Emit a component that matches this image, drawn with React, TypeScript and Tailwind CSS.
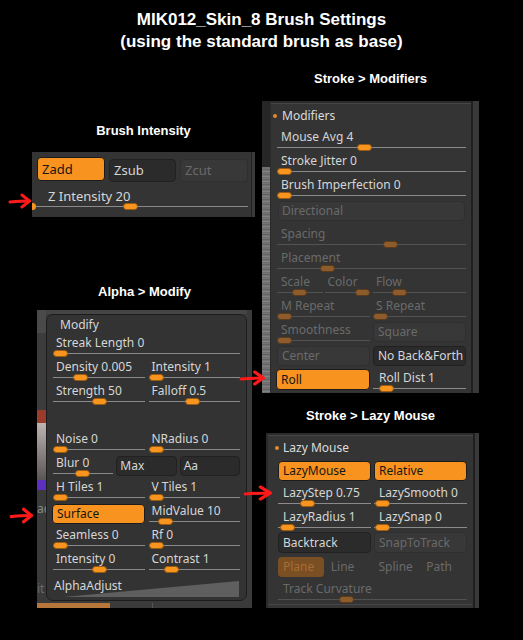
import React from 'react';

type Kind = 'on' | 'off' | 'dis' | 'plane';

const boxKind: Record<Kind, string> = {
  on: 'bg-[#f7931e] border border-[#1b1b1b] text-[#161616]',
  off: 'bg-[#2b2b2b] border border-[#212121] text-[#d6d6d6]',
  dis: 'bg-[#383838] border border-[#2f2f2f] text-[#6a6a6a]',
  plane: 'bg-[#7a4f24] text-[#a86c33]',
};

function Box({
  label,
  kind,
  cls = 'mt-[1px] h-[20px]',
  pl = 'pl-[4px]',
}: {
  label: string;
  kind: Kind;
  cls?: string;
  pl?: string;
}) {
  return (
    <div className={`flex items-center rounded-[4px] whitespace-nowrap leading-none ${boxKind[kind]} ${cls} ${pl}`}>
      {label}
    </div>
  );
}

function Slider({
  label,
  x,
  dim = false,
  pl = 'pl-[4px]',
}: {
  label: string;
  x: number;
  dim?: boolean;
  pl?: string;
}) {
  return (
    <div className="relative h-[24px]">
      <div className={`leading-[18px] whitespace-nowrap ${pl} ${dim ? 'text-[#6a6a6a]' : 'text-[#d6d6d6]'}`}>{label}</div>
      <div className={`absolute left-0 right-0 top-[19px] h-px ${dim ? 'bg-[#525252]' : 'bg-[#8a8a8a]'}`} />
      <div
        className={`absolute top-[16px] h-[7px] w-[15px] rounded-full border ${
          dim ? 'bg-[#8d5c2c] border-[#5e3b18]' : 'bg-[#f8951f] border-[#9c5a12]'
        }`}
        style={{ left: x }}
      />
    </div>
  );
}

function Label({ children, className = '' }: { children: React.ReactNode; className?: string }) {
  return (
    <div
      className={`text-center font-['Liberation_Sans',Arial,sans-serif] font-bold text-[13px] leading-[16px] text-white ${className}`}
    >
      {children}
    </div>
  );
}

function Arrow({ className }: { className: string }) {
  return (
    <svg
      className={`absolute ${className}`}
      viewBox="0 0 24 16"
      preserveAspectRatio="none"
      fill="none"
      stroke="#ff1a1a"
      strokeWidth="3"
      strokeLinecap="round"
      strokeLinejoin="round"
    >
      <path d="M2 9 C8 8.5 15 8 22 8" />
      <path d="M14.5 2 L22.5 8 L14.5 14" />
    </svg>
  );
}

function BrushPanel() {
  return (
    <div className="mt-[13px] ml-[32px] flex h-[65px] w-[223px] bg-[#343434] text-[13px]">
      <div className="flex-1">
        <div className="flex gap-[4px] pl-[5px] pt-[5px]">
          <Box label="Zadd" kind="on" cls="h-[24px] w-[68px]" />
          <Box label="Zsub" kind="off" cls="mt-[2px] h-[23px] w-[67px]" />
          <Box label="Zcut" kind="dis" cls="mt-[2px] h-[23px] w-[68px]" />
        </div>
        <div className="relative ml-[4px] mr-[3px] mt-[5px]">
          <div className="absolute -left-[4px] top-[16px] h-[7px] w-[4px] rounded-r-full bg-[#f8951f]" />
          <Slider label="Z Intensity 20" x={87} pl="pl-[12px]" />
        </div>
      </div>
      <div className="w-px bg-[#222222]" />
      <div className="w-[3px] bg-[#3a3a3a]" />
    </div>
  );
}

function ModifiersPanel() {
  return (
    <div className="mt-[14px] flex h-[292px] bg-[#343434]">
      <div className="flex w-[8px] flex-col">
        <div className="h-[66px] bg-[#262626]" />
        <div className="flex-1 bg-[repeating-linear-gradient(0deg,#666666_0px,#8a8a8a_2px,#5c5c5c_3px,#7a7a7a_5px)]" />
      </div>
      <div className="flex flex-1 flex-col border-l border-[#2a2a2a]">
        <div className="h-[2px] bg-[#2a2a2a]" />
        <div className="h-px bg-[#474747]" />
        <div className="mb-[2px] mt-[2px] flex h-[20px] items-center pl-[2px] text-[#dcdcdc]">
          <span className="h-[4px] w-[4px] rounded-full bg-[#e8872a]" />
          <span className="ml-[5px]">Modifiers</span>
        </div>
        <div className="pl-[6px] pr-[5px]">
          <Slider label="Mouse Avg 4" x={80} />
          <Slider label="Stroke Jitter 0" x={0} />
          <Slider label="Brush Imperfection 0" x={0} />
          <div className="h-[24px] px-[1px]">
            <Box label="Directional" kind="dis" pl="pl-[3px]" />
          </div>
          <Slider label="Spacing" x={106} dim />
          <Slider label="Placement" x={43} dim />
          <div className="grid grid-cols-2 gap-[3px]">
            <div className="flex gap-[2px]">
              <div className="flex-1">
                <Slider label="Scale" x={15} dim />
              </div>
              <div className="flex-1">
                <Slider label="Color" x={30} dim pl="pl-[3px]" />
              </div>
            </div>
            <Slider label="Flow" x={19} dim pl="pl-[3px]" />
          </div>
          <div className="grid grid-cols-2 gap-[3px]">
            <Slider label="M Repeat" x={0} dim />
            <Slider label="S Repeat" x={0} dim pl="pl-[3px]" />
          </div>
          <div className="grid grid-cols-2 gap-[3px]">
            <Slider label="Smoothness" x={0} dim />
            <div className="h-[24px]">
              <Box label="Square" kind="dis" />
            </div>
          </div>
          <div className="grid grid-cols-2 gap-[3px]">
            <div className="h-[24px]">
              <Box label="Center" kind="dis" />
            </div>
            <div className="h-[24px]">
              <Box label="No Back&Forth" kind="off" />
            </div>
          </div>
          <div className="grid grid-cols-2 gap-[3px]">
            <div className="h-[24px]">
              <Box label="Roll" kind="on" cls="h-[21px] -ml-[1px]" />
            </div>
            <Slider label="Roll Dist 1" x={6} pl="pl-[6px]" />
          </div>
        </div>
      </div>
      <div className="w-[2px] bg-[#1f1f1f]" />
      <div className="w-[6px] bg-[#393939]" />
    </div>
  );
}

function LazyPanel() {
  return (
    <div className="ml-[4px] mt-[9px] flex h-[175px] bg-[#343434]">
      <div className="w-[2px] bg-[#292929]" />
      <div className="flex flex-1 flex-col">
        <div className="h-[2px] bg-[#2a2a2a]" />
        <div className="h-px bg-[#474747]" />
        <div className="mb-[2px] mt-[2px] flex h-[20px] items-center pl-[7px] text-[#dcdcdc]">
          <span className="h-[4px] w-[4px] rounded-full bg-[#e8872a]" />
          <span className="ml-[4px]">Lazy Mouse</span>
        </div>
        <div className="pl-[10px] pr-[6px]">
          <div className="grid h-[24px] grid-cols-2 gap-[3px]">
            <Box label="LazyMouse" kind="on" />
            <Box label="Relative" kind="on" />
          </div>
          <div className="grid grid-cols-2 gap-[3px]">
            <Slider label="LazyStep 0.75" x={22} pl="pl-[5px]" />
            <Slider label="LazySmooth 0" x={1} pl="pl-[5px]" />
          </div>
          <div className="grid grid-cols-2 gap-[3px]">
            <Slider label="LazyRadius 1" x={2} pl="pl-[5px]" />
            <Slider label="LazySnap 0" x={1} pl="pl-[5px]" />
          </div>
          <div className="grid h-[24px] grid-cols-2 gap-[3px]">
            <Box label="Backtrack" kind="off" cls="h-[21px]" />
            <Box label="SnapToTrack" kind="dis" cls="h-[21px]" />
          </div>
          <div className="grid h-[24px] grid-cols-4 gap-[2px]">
            <Box label="Plane" kind="plane" pl="pl-[5px]" />
            <div className="mt-[1px] flex h-[20px] items-center pl-[5px] text-[#6a6a6a]">Line</div>
            <div className="mt-[1px] flex h-[20px] items-center pl-[5px] text-[#6a6a6a]">Spline</div>
            <div className="mt-[1px] flex h-[20px] items-center pl-[5px] text-[#6a6a6a]">Path</div>
          </div>
          <Slider label="Track Curvature" x={61} dim pl="pl-[5px]" />
        </div>
        <div className="mr-[1px] h-px bg-[#474747]" />
      </div>
      <div className="w-[2px] bg-[#1f1f1f]" />
      <div className="w-[4px] bg-[#393939]" />
    </div>
  );
}

function AlphaPanel() {
  return (
    <div className="ml-[37px] mt-[10px] flex h-[298px] w-[215px] bg-[#3a3a3a]">
      <div className="flex w-[9px] flex-col overflow-hidden">
        <div className="h-[23px] bg-[#4a4a4a]" />
        <div className="h-[77px] bg-[#3c3c3c]" />
        <div className="h-[13px] bg-[#9b3b2b]" />
        <div className="h-[57px] bg-[linear-gradient(180deg,#bdb3b3,#5a5555)]" />
        <div className="h-[10px] bg-[#5b2fc0]" />
        <div className="h-[9px] bg-[#3a3a3a]" />
        <div className="h-[20px] leading-[20px] text-[12px] text-[#8a8a8a] whitespace-nowrap">ac</div>
        <div className="h-[60px] bg-[#3a3a3a]" />
        <div className="h-[20px] leading-[20px] text-[12px] text-[#6a6a6a] whitespace-nowrap">it</div>
        <div className="h-[4px]" />
        <div className="h-[5px] bg-[#b8773a]" />
      </div>
      <div className="flex w-[201px] flex-col">
        <div className="h-[4px] bg-[#454545]" />
        <div className="h-[287px] rounded-[7px] border border-[#1c1c1c] bg-[#333333]">
          <div className="h-[19px] pl-[13px] leading-[20px] text-[#d6d6d6]">Modify</div>
          <div className="px-[6px]">
            <Slider label="Streak Length 0" x={0} pl="pl-[3px]" />
            <div className="grid grid-cols-2 gap-[4px]">
              <Slider label="Density 0.005" x={20} pl="pl-[3px]" />
              <Slider label="Intensity 1" x={0} pl="pl-[3px]" />
            </div>
            <div className="grid grid-cols-2 gap-[4px]">
              <Slider label="Strength 50" x={39} pl="pl-[3px]" />
              <Slider label="Falloff 0.5" x={36} pl="pl-[3px]" />
            </div>
            <div className="h-[24px]" />
            <div className="grid grid-cols-2 gap-[4px]">
              <Slider label="Noise 0" x={0} pl="pl-[3px]" />
              <Slider label="NRadius 0" x={0} pl="pl-[3px]" />
            </div>
            <div className="grid grid-cols-3 gap-[3px]">
              <Slider label="Blur 0" x={22} pl="pl-[3px]" />
              <div className="h-[24px]">
                <Box label="Max" kind="off" cls="mt-[2px] h-[20px]" pl="pl-[3px]" />
              </div>
              <div className="h-[24px]">
                <Box label="Aa" kind="off" cls="mt-[2px] h-[20px]" pl="pl-[3px]" />
              </div>
            </div>
            <div className="grid grid-cols-2 gap-[4px]">
              <Slider label="H Tiles 1" x={0} pl="pl-[3px]" />
              <Slider label="V Tiles 1" x={0} pl="pl-[3px]" />
            </div>
            <div className="grid grid-cols-2 gap-[4px]">
              <div className="h-[24px]">
                <Box label="Surface" kind="on" cls="mt-[2px] h-[20px] -ml-[1px]" />
              </div>
              <Slider label="MidValue 10" x={9} pl="pl-[3px]" />
            </div>
            <div className="grid grid-cols-2 gap-[4px]">
              <Slider label="Seamless 0" x={0} pl="pl-[3px]" />
              <Slider label="Rf 0" x={0} pl="pl-[3px]" />
            </div>
            <div className="grid grid-cols-2 gap-[4px]">
              <Slider label="Intensity 0" x={39} pl="pl-[3px]" />
              <Slider label="Contrast 1" x={15} pl="pl-[3px]" />
            </div>
            <div className="relative h-[26px]">
              <svg className="absolute left-[10px] top-[4px] h-[16px] w-[176px]" viewBox="0 0 176 16" preserveAspectRatio="none">
                <polygon points="0,16 176,0 176,16" fill="#5f5f5f" />
              </svg>
              <div className="relative mt-[3px] pl-[1px] leading-[18px] text-[#d6d6d6]">AlphaAdjust</div>
            </div>
          </div>
        </div>
        <div className="mt-[2px] flex h-[5px]">
          <div className="w-[64px] bg-[#b8773a]" />
          <div className="ml-[42px] w-px bg-[#555555]" />
        </div>
      </div>
      <div className="w-[5px] bg-[#3a3a3a]" />
    </div>
  );
}

export default function App() {
  return (
    <div className="relative h-[640px] w-[523px] overflow-hidden bg-black font-['Noto_Sans',sans-serif] text-[12px]">
      <div className="pt-[9px] text-center font-['Liberation_Sans',Arial,sans-serif] text-[17px] font-bold leading-[22px] text-white">
        <div>MIK012_Skin_8 Brush Settings</div>
        <div>(using the standard brush as base)</div>
      </div>
      <div className="flex">
        <div className="w-[262px] shrink-0">
          <Label className="ml-[32px] mt-[70px] w-[223px]">Brush Intensity</Label>
          <BrushPanel />
          <Label className="ml-[37px] mt-[67px] w-[215px]">Alpha &gt; Modify</Label>
          <AlphaPanel />
        </div>
        <div className="w-[217px] shrink-0">
          <Label className="mt-[18px]">Stroke &gt; Modifiers</Label>
          <ModifiersPanel />
          <Label className="mt-[15px]">Stroke &gt; Lazy Mouse</Label>
          <LazyPanel />
        </div>
      </div>
      <Arrow className="left-[8px] top-[193px] h-[16px] w-[23px]" />
      <Arrow className="left-[239px] top-[370px] h-[16px] w-[26px]" />
      <Arrow className="left-[243px] top-[485px] h-[16px] w-[29px]" />
      <Arrow className="left-[9px] top-[507px] h-[17px] w-[24px]" />
    </div>
  );
}
